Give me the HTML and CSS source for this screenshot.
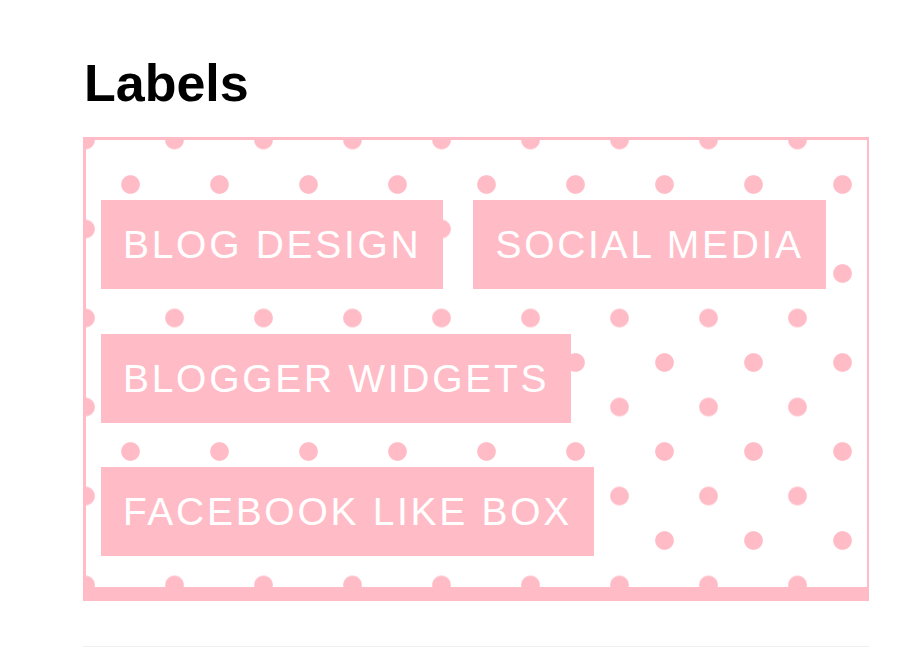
FILE: index.html
```html
<!DOCTYPE html>
<html>
<head>
<meta charset="utf-8">
<link rel="stylesheet" href="styles.css">
</head>
<body>
<div class="page">
  <h2 class="title">Labels</h2>
  <div class="widget">
    <div class="labels">
      <a class="label">BLOG DESIGN</a>
      <a class="label">SOCIAL MEDIA</a>
      <a class="label">BLOGGER WIDGETS</a>
      <a class="label">FACEBOOK LIKE BOX</a>
    </div>
  </div>
  <div class="rule"></div>
</div>
</body>
</html>
```
FILE: styles.css
```css
html, body {
  margin: 0;
  padding: 0;
  background: #ffffff;
}
.page {
  padding: 58px 0 0 83px;
  width: 786px;
}
.title {
  margin: 0 0 28px 1px;
  font-family: "Liberation Sans", Arial, sans-serif;
  font-weight: bold;
  font-size: 52px;
  line-height: 51px;
  color: #000000;
}
.widget {
  border: 3px solid #ffbbc6;
  border-right-width: 2px;
  border-bottom-width: 14px;
  padding: 60px 15px 31px 15px;
  background-color: #ffffff;
  background-image:
    radial-gradient(circle, #ffbbc6 8.8px, rgba(255,187,198,0) 9.8px),
    radial-gradient(circle, #ffbbc6 8.8px, rgba(255,187,198,0) 9.8px);
  background-size: 89px 89px, 89px 89px;
  background-position: -45px -44.5px, 0 0;
}
.labels {
  display: flex;
  flex-wrap: wrap;
  column-gap: 30px;
  row-gap: 44.5px;
}
.label {
  display: block;
  height: 89px;
  line-height: 89px;
  padding: 0 22px;
  background: #ffbbc6;
  color: #ffffff;
  font-family: "Liberation Sans", Arial, sans-serif;
  font-size: 39px;
  letter-spacing: 2.7px;
  white-space: nowrap;
}
.rule {
  margin-top: 45px;
  height: 1px;
  background: #efefef;
}
```
